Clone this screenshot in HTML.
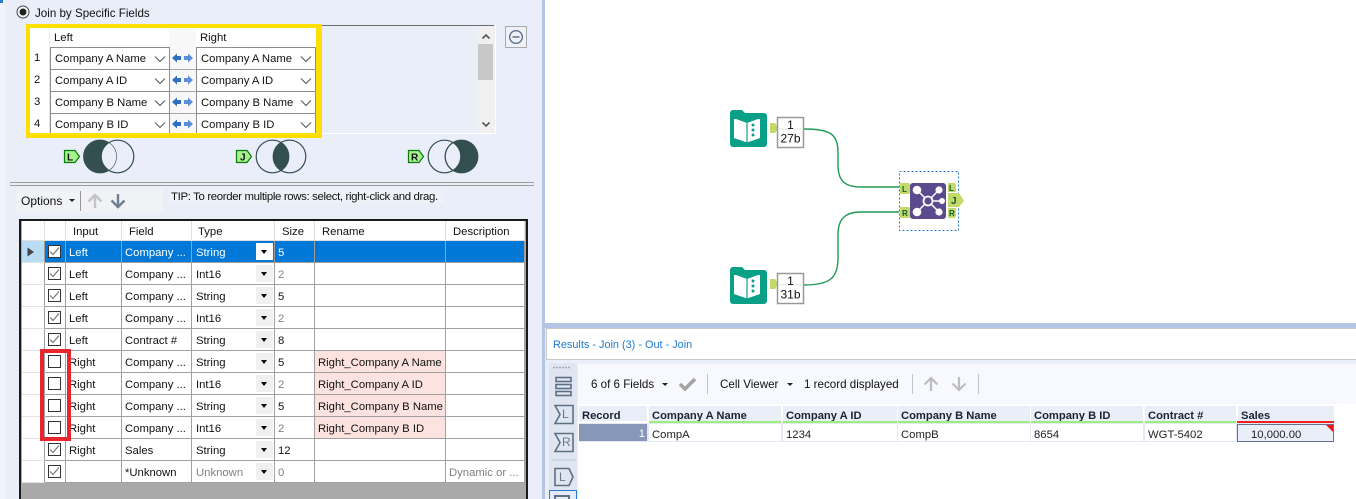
<!DOCTYPE html>
<html><head><meta charset="utf-8"><style>
html,body{margin:0;padding:0;width:1356px;height:499px;overflow:hidden;background:#e9eef9}
body{position:relative;font-family:"Liberation Sans",sans-serif;font-size:11.3px;color:#111}
.a{position:absolute;white-space:nowrap}
table{border-collapse:separate;border-spacing:0;table-layout:fixed;position:absolute}
#g{left:22px;top:221px;width:503px;background:#fff;font-size:11.3px}
#g td,#g th{box-sizing:border-box;border-right:1px solid #a0a0a0;border-bottom:1px solid #a0a0a0;height:22px;padding:3px 0 0 3px;font-weight:normal;text-align:left;white-space:nowrap;overflow:hidden;position:relative;line-height:18px}
#g th{height:20px;border-color:#e0e0e0;padding-left:7px;line-height:16px}
#g td:nth-child(5){padding-left:4px}
#g td:first-child{border-right:1px solid #a0a0a0;border-bottom-color:#e4e4e4}
#g tr.s td{background:#0078d7;color:#fff}
#g tr.s td:first-child{background:#b8dcf3}
#g td.k,#g th.k{padding:0}
.g{color:#808080}.p{background:#fde3df}
.b{position:absolute;left:64px;top:2px;width:17px;height:17px;background:#f0f0f0}
.b:after{content:"";position:absolute;left:5px;top:7px;border:3px solid transparent;border-top:4px solid #000;border-bottom:0}
tr.s .b{background:#fff}
.c{position:absolute;left:3px;top:4px;width:11px;height:11px;border:1px solid #333;background:#fff}
.c svg{position:absolute;left:0;top:0}
.j{position:absolute;background:#fff;border:1px solid #8c8c8c;box-sizing:border-box;padding-left:4px}
.j svg{position:absolute;right:3px;top:7px}
.h{position:absolute;top:406px;height:15px;background:#e9eef9;font-weight:bold;font-size:11.2px;line-height:20px;padding-left:3px;box-sizing:border-box;color:#1a2430}
.u{position:absolute;top:421px;height:2px;background:#9cf07a}
.d{position:absolute;top:424px;height:17px;background:#fff;line-height:22px;padding-left:3px;box-sizing:border-box;color:#222;font-size:11.3px}
</style></head><body>
<div class="a" style="left:0;top:0;width:5px;height:499px;background:#f1f4fb"></div>
<div class="a" style="left:0;top:0;width:3px;height:3px;background:#2a7bd0"></div>

<!-- radio -->
<svg class="a" style="left:16px;top:5px" width="14" height="14"><circle cx="7" cy="7" r="6" fill="#f4f6fb" stroke="#444"/><circle cx="7" cy="7" r="3.5" fill="#222"/></svg>
<div class="a" style="left:35px;top:6px;line-height:15px;font-size:11.6px">Join by Specific Fields</div>

<!-- join table surroundings -->
<div class="a" style="left:322px;top:25px;width:172px;height:1px;background:#6c6c6c"></div>
<div class="a" style="left:322px;top:133px;width:174px;height:1px;background:#fff"></div>
<div class="a" style="left:495px;top:26px;width:1px;height:108px;background:#fff"></div>
<div class="a" style="left:478px;top:27px;width:17px;height:106px;background:#f0f0f0"></div>
<div class="a" style="left:478px;top:44px;width:15px;height:36px;background:#c8c8c8"></div>
<svg class="a" style="left:481px;top:33px" width="10" height="7"><path d="M1.500 5.500L5 2l3.500 3.500" fill="none" stroke="#555" stroke-width="1.600"/></svg>
<svg class="a" style="left:481px;top:121px" width="10" height="7"><path d="M1.500 1.500L5 5l3.500-3.500" fill="none" stroke="#555" stroke-width="1.600"/></svg>
<div class="a" style="left:505px;top:26px;width:20px;height:20px;border:1px solid #aaa;background:#eef1f8"></div>
<svg class="a" style="left:508px;top:29px" width="16" height="16"><circle cx="8" cy="8" r="6.300" fill="none" stroke="#5e7183" stroke-width="1.400"/><path d="M4.500 8h7" stroke="#5e7183" stroke-width="1.500"/></svg>

<!-- join table -->
<div class="a" style="left:26px;top:24px;width:296px;height:114px;background:#fff"></div>
<div class="a" style="left:49px;top:29px;width:1px;height:104px;background:#e8e8e8"></div>
<div class="a" style="left:169px;top:29px;width:27px;height:104px;background:#f8f8f8"></div>
<div class="a" style="left:169px;top:69px;width:27px;height:1px;background:#a8a8a8"></div>
<div class="a" style="left:169px;top:91px;width:27px;height:1px;background:#a8a8a8"></div>
<div class="a" style="left:169px;top:113px;width:27px;height:1px;background:#a8a8a8"></div>
<div class="a" style="left:54px;top:31px;line-height:15px">Left</div>
<div class="a" style="left:200px;top:31px;line-height:15px">Right</div>
<div class="a" style="left:34px;top:51px;line-height:15px">1</div>
<div class="a" style="left:34px;top:73px;line-height:15px">2</div>
<div class="a" style="left:34px;top:95px;line-height:15px">3</div>
<div class="a" style="left:34px;top:117px;line-height:15px">4</div>

<div class="j" style="left:50px;top:47px;width:120px;height:23px;line-height:22px">Company A Name<svg width="12" height="8"><path d="M1 1.500l5 5 5-5" fill="none" stroke="#555"/></svg></div>
<div class="j" style="left:50px;top:69px;width:120px;height:23px;line-height:22px">Company A ID<svg width="12" height="8"><path d="M1 1.500l5 5 5-5" fill="none" stroke="#555"/></svg></div>
<div class="j" style="left:50px;top:91px;width:120px;height:23px;line-height:22px">Company B Name<svg width="12" height="8"><path d="M1 1.500l5 5 5-5" fill="none" stroke="#555"/></svg></div>
<div class="j" style="left:50px;top:113px;width:120px;height:20px;line-height:22px;border-bottom:0;overflow:hidden">Company B ID<svg width="12" height="8"><path d="M1 1.500l5 5 5-5" fill="none" stroke="#555"/></svg></div>
<div class="j" style="left:196px;top:47px;width:120px;height:23px;line-height:22px">Company A Name<svg width="12" height="8"><path d="M1 1.500l5 5 5-5" fill="none" stroke="#555"/></svg></div>
<div class="j" style="left:196px;top:69px;width:120px;height:23px;line-height:22px">Company A ID<svg width="12" height="8"><path d="M1 1.500l5 5 5-5" fill="none" stroke="#555"/></svg></div>
<div class="j" style="left:196px;top:91px;width:120px;height:23px;line-height:22px">Company B Name<svg width="12" height="8"><path d="M1 1.500l5 5 5-5" fill="none" stroke="#555"/></svg></div>
<div class="j" style="left:196px;top:113px;width:120px;height:20px;line-height:22px;border-bottom:0;overflow:hidden">Company B ID<svg width="12" height="8"><path d="M1 1.500l5 5 5-5" fill="none" stroke="#555"/></svg></div>

<svg class="a" style="left:172px;top:53px" width="22" height="10"><path d="M0 5l5-4.500V3h4v4H5v2.500z" fill="#2f6fc0"/><path d="M21 5l-5-4.500V3h-4v4h4v2.500z" fill="#5d8ed8"/></svg>
<svg class="a" style="left:172px;top:75px" width="22" height="10"><path d="M0 5l5-4.500V3h4v4H5v2.500z" fill="#2f6fc0"/><path d="M21 5l-5-4.500V3h-4v4h4v2.500z" fill="#5d8ed8"/></svg>
<svg class="a" style="left:172px;top:97px" width="22" height="10"><path d="M0 5l5-4.500V3h4v4H5v2.500z" fill="#2f6fc0"/><path d="M21 5l-5-4.500V3h-4v4h4v2.500z" fill="#5d8ed8"/></svg>
<svg class="a" style="left:172px;top:119px" width="22" height="10"><path d="M0 5l5-4.500V3h4v4H5v2.500z" fill="#2f6fc0"/><path d="M21 5l-5-4.500V3h-4v4h4v2.500z" fill="#5d8ed8"/></svg>

<!-- yellow frame overlay -->
<div class="a" style="left:26px;top:24px;width:286px;height:105px;border:solid #ffdf00;border-width:4px 6px 5px 4px"></div>

<!-- venn -->
<svg class="a" style="left:60px;top:138px" width="430" height="38">
<g>
<path d="M4.500 12.500h10.500l4.500 6-4.500 6h-10.500z" fill="#a5f28f" stroke="#0a7a0a" stroke-width="1.200"/>
<path d="M176.500 12.500h10.500l4.500 6-4.500 6h-10.500z" fill="#a5f28f" stroke="#0a7a0a" stroke-width="1.200"/>
<path d="M348.500 12.500h10.500l4.500 6-4.500 6h-10.500z" fill="#a5f28f" stroke="#0a7a0a" stroke-width="1.200"/>
<text x="7" y="22.500" font-size="10" font-weight="bold" fill="#111" font-family="Liberation Sans">L</text>
<text x="180" y="22.500" font-size="10" font-weight="bold" fill="#111" font-family="Liberation Sans">J</text>
<text x="351" y="22.500" font-size="10" font-weight="bold" fill="#111" font-family="Liberation Sans">R</text>
</g>
<g fill="none" stroke="#344f4f" stroke-width="1.200">
<circle cx="40" cy="18.500" r="16.300" fill="#344f4f"/>
<path d="M48.750 4.750A16.300 16.300 0 0 0 48.750 32.250A16.300 16.300 0 0 0 48.750 4.750z" fill="#e9eef9" stroke="none"/>
<circle cx="57.500" cy="18.500" r="16.300"/>
<circle cx="212.500" cy="18.500" r="16.300"/>
<circle cx="229.500" cy="18.500" r="16.300"/>
<path d="M221 4.600A16.300 16.300 0 0 1 221 32.400A16.300 16.300 0 0 1 221 4.600z" fill="#344f4f" stroke="none"/>
<circle cx="401.500" cy="18.500" r="16.300" fill="#344f4f"/>
<path d="M393 4.600A16.300 16.300 0 0 1 393 32.400A16.300 16.300 0 0 1 393 4.600z" fill="#e9eef9" stroke="none"/>
<circle cx="384.500" cy="18.500" r="16.300"/>
<path d="M393 4.600A16.300 16.300 0 0 0 393 32.400"/>
</g></svg>

<!-- divider -->
<div class="a" style="left:10px;top:182px;width:524px;height:1px;background:#9c9c9c"></div>
<div class="a" style="left:10px;top:185px;width:524px;height:1px;background:#9c9c9c"></div>

<!-- options toolbar -->
<div class="a" style="left:16px;top:189px;width:147px;height:24px;background:#f0f2f6"></div>
<div class="a" style="left:21px;top:193px;line-height:16px;font-size:12px">Options</div>
<div class="a" style="left:69px;top:199px;border:3px solid transparent;border-top:3px solid #222;border-bottom:0"></div>
<div class="a" style="left:80px;top:191px;width:1px;height:20px;background:#999"></div>
<svg class="a" style="left:86px;top:192px" width="18" height="18"><path d="M9 16V3M2.500 9.500L9 3l6.500 6.500" fill="none" stroke="#c4c4c4" stroke-width="2.400"/></svg>
<svg class="a" style="left:109px;top:192px" width="18" height="18"><path d="M9 2v13M2.500 8.500L9 15l6.500-6.500" fill="none" stroke="#6d7e92" stroke-width="2.400"/></svg>
<div class="a" style="left:169px;top:190px;width:275px;height:13px;background:#eef1f7"></div>
<div class="a" style="left:171px;top:189px;line-height:16px;font-size:11.400px;letter-spacing:-.34px">TIP: To reorder multiple rows: select, right-click and drag.</div>

<!-- grid -->
<div class="a" style="left:19px;top:219px;width:505px;height:290px;border:2px solid #1a1a1a;background:#a9a9a9"></div>
<table id="g" cellspacing="0">
<colgroup><col style="width:23px"><col style="width:21px"><col style="width:56px"><col style="width:70px"><col style="width:83px"><col style="width:40px"><col style="width:131px"><col style="width:79px"></colgroup>
<tr><th></th><th class="k"></th><th>Input</th><th>Field</th><th style="padding-left:6px">Type</th><th>Size</th><th>Rename</th><th>Description</th></tr>
<tr class="s"><td class="k"><svg style="position:absolute;left:5px;top:6px" width="8" height="10"><path d="M0.500 0.500L7 5 0.500 9.500z" fill="#444"/></svg></td><td class="k"><span class="c"><svg width="11" height="11"><path d="M1 5.500l3 3 6-7" fill="none" stroke="#777" stroke-width="1.200"/></svg></span></td><td>Left</td><td>Company ...</td><td>String<span class="b"></span></td><td>5</td><td></td><td></td></tr>
<tr><td class="k"></td><td class="k"><span class="c"><svg width="11" height="11"><path d="M1 5.500l3 3 6-7" fill="none" stroke="#777" stroke-width="1.200"/></svg></span></td><td>Left</td><td>Company ...</td><td>Int16<span class="b"></span></td><td class="g">2</td><td></td><td></td></tr>
<tr><td class="k"></td><td class="k"><span class="c"><svg width="11" height="11"><path d="M1 5.500l3 3 6-7" fill="none" stroke="#777" stroke-width="1.200"/></svg></span></td><td>Left</td><td>Company ...</td><td>String<span class="b"></span></td><td>5</td><td></td><td></td></tr>
<tr><td class="k"></td><td class="k"><span class="c"><svg width="11" height="11"><path d="M1 5.500l3 3 6-7" fill="none" stroke="#777" stroke-width="1.200"/></svg></span></td><td>Left</td><td>Company ...</td><td>Int16<span class="b"></span></td><td class="g">2</td><td></td><td></td></tr>
<tr><td class="k"></td><td class="k"><span class="c"><svg width="11" height="11"><path d="M1 5.500l3 3 6-7" fill="none" stroke="#777" stroke-width="1.200"/></svg></span></td><td>Left</td><td>Contract #</td><td>String<span class="b"></span></td><td>8</td><td></td><td></td></tr>
<tr><td class="k"></td><td class="k"><span class="c"></span></td><td>Right</td><td>Company ...</td><td>String<span class="b"></span></td><td>5</td><td class="p">Right_Company A Name</td><td></td></tr>
<tr><td class="k"></td><td class="k"><span class="c"></span></td><td>Right</td><td>Company ...</td><td>Int16<span class="b"></span></td><td class="g">2</td><td class="p">Right_Company A ID</td><td></td></tr>
<tr><td class="k"></td><td class="k"><span class="c"></span></td><td>Right</td><td>Company ...</td><td>String<span class="b"></span></td><td>5</td><td class="p">Right_Company B Name</td><td></td></tr>
<tr><td class="k"></td><td class="k"><span class="c"></span></td><td>Right</td><td>Company ...</td><td>Int16<span class="b"></span></td><td class="g">2</td><td class="p">Right_Company B ID</td><td></td></tr>
<tr><td class="k"></td><td class="k"><span class="c"><svg width="11" height="11"><path d="M1 5.500l3 3 6-7" fill="none" stroke="#777" stroke-width="1.200"/></svg></span></td><td>Right</td><td>Sales</td><td>String<span class="b"></span></td><td>12</td><td></td><td></td></tr>
<tr><td class="k"></td><td class="k"><span class="c"><svg width="11" height="11"><path d="M1 5.500l3 3 6-7" fill="none" stroke="#777" stroke-width="1.200"/></svg></span></td><td></td><td>*Unknown</td><td class="g">Unknown<span class="b"></span></td><td class="g">0</td><td></td><td class="g">Dynamic or ...</td></tr>
</table>
<div class="a" style="left:40px;top:349px;width:23px;height:84px;border:4px solid #e8262d"></div>

<!-- right pane -->
<div class="a" style="left:542px;top:0;width:3px;height:499px;background:#b4c4e4"></div>
<div class="a" style="left:545px;top:0;width:811px;height:323px;background:#fff"></div>
<div class="a" style="left:545px;top:323px;width:811px;height:5px;background:#b4c4e4"></div>

<!-- canvas -->
<svg class="a" style="left:545px;top:0" width="811" height="323">
<g fill="none" stroke="#1f9a55" stroke-width="1.400">
<path d="M259 129C285 129 293 134 293 152V165C293 181 300 187 316 187H354"/>
<path d="M259 285C285 285 293 278 293 258V235C293 219 300 212 316 212H354"/>
</g>
<path d="M185 113a3 3 0 0 1 3-3h9l3 3h19a3 3 0 0 1 3 3v28a3 3 0 0 1-3 3h-31a3 3 0 0 1-3-3z" fill="#0aa088"/>
<path d="M191 119l11 4 11-4 2 0v19l-13 5-13-5v-19z" fill="#fff"/>
<path d="M202 123v20" stroke="#0aa088" stroke-width="1.200"/>
<path d="M190 139l12 4 12-4" fill="none" stroke="#0aa088" stroke-width="1"/>
<circle cx="208" cy="125" r="1.500" fill="#0aa088"/><circle cx="208" cy="130" r="1.500" fill="#0aa088"/><circle cx="208" cy="135" r="1.500" fill="#0aa088"/>
<path d="M225 123h5l2 3v4l-2 3h-5z" fill="#c3d96a"/>
<rect x="232.500" y="117.500" width="26" height="30" fill="#fff" stroke="#999" stroke-width="1.500"/>
<path d="M233 129h25" stroke="#dfeee4"/>
<text x="245.500" y="129" font-size="12" text-anchor="middle" font-family="Liberation Sans" fill="#111">1</text>
<text x="245.500" y="142.500" font-size="12" text-anchor="middle" font-family="Liberation Sans" fill="#111">27b</text>
<path d="M185 270a3 3 0 0 1 3-3h9l3 3h19a3 3 0 0 1 3 3v28a3 3 0 0 1-3 3h-31a3 3 0 0 1-3-3z" fill="#0aa088"/>
<path d="M191 275l11 4 11-4 2 0v19l-13 5-13-5v-19z" fill="#fff"/>
<path d="M202 279v20" stroke="#0aa088" stroke-width="1.200"/>
<path d="M190 295l12 4 12-4" fill="none" stroke="#0aa088" stroke-width="1"/>
<circle cx="208" cy="281" r="1.500" fill="#0aa088"/><circle cx="208" cy="286" r="1.500" fill="#0aa088"/><circle cx="208" cy="291" r="1.500" fill="#0aa088"/>
<path d="M225 279h5l2 3v4l-2 3h-5z" fill="#c3d96a"/>
<rect x="232.500" y="273.500" width="26" height="30" fill="#fff" stroke="#999" stroke-width="1.500"/>
<path d="M233 285h25" stroke="#dfeee4"/>
<text x="245.500" y="285" font-size="12" text-anchor="middle" font-family="Liberation Sans" fill="#111">1</text>
<text x="245.500" y="298.500" font-size="12" text-anchor="middle" font-family="Liberation Sans" fill="#111">31b</text>
<rect x="354.500" y="171.500" width="59" height="59" fill="none" stroke="#2a7bd0" stroke-dasharray="2 2"/>
<path d="M355 183h9l2 3v6l-2 2h-9z" fill="#c3d96a"/>
<path d="M355 207h9l2 3v6l-2 2h-9z" fill="#c3d96a"/>
<text x="357" y="192" font-size="8" font-weight="bold" fill="#0e5c30" font-family="Liberation Sans">L</text>
<text x="357" y="216" font-size="8" font-weight="bold" fill="#0e5c30" font-family="Liberation Sans">R</text>
<rect x="365" y="183" width="36" height="36" rx="3" fill="#5b4a8e"/>
<g stroke="#fff" stroke-width="1.500" fill="none">
<path d="M372 190l11 11M394 190l-11 11M372 212l11-11M394 212l-11-11M383 201h13"/>
<circle cx="383" cy="201" r="4.500" fill="#5b4a8e" stroke-width="1.800"/>
</g>
<g fill="#fff"><circle cx="372" cy="190" r="4.300"/><circle cx="394" cy="190" r="3.600"/><circle cx="397" cy="201" r="3"/><circle cx="372" cy="212" r="4.300"/><circle cx="394" cy="212" r="3.600"/></g>
<path d="M403 183h7l1 2v7h-8zM403 208h8v7l-1 3h-7z" fill="#c3d96a"/>
<path d="M403 193h11l5 8-5 6h-11z" fill="#c3d96a"/>
<text x="404" y="191" font-size="8" font-weight="bold" fill="#0e5c30" font-family="Liberation Sans">L</text>
<text x="406" y="204" font-size="10" font-weight="bold" fill="#0e5c30" font-family="Liberation Sans">J</text>
<text x="404" y="216" font-size="8" font-weight="bold" fill="#0e5c30" font-family="Liberation Sans">R</text>
</svg>

<!-- results -->
<div class="a" style="left:546px;top:328px;width:810px;height:30px;background:#fff;border:1px solid #c8c8c8;border-right:0"></div>
<div class="a" style="left:553px;top:337px;line-height:16px;color:#1f7ad0;font-size:10.900px">Results - Join (3) - Out - Join</div>
<div class="a" style="left:578px;top:364px;width:778px;height:40px;background:#f8f9fe"></div>
<div class="a" style="left:578px;top:404px;width:778px;height:95px;background:#fff"></div>
<div class="a" style="left:549px;top:363px;width:28px;height:136px;background:#dfe5f1"></div>

<svg class="a" style="left:549px;top:363px" width="29" height="136" fill="none" stroke="#5e7183" stroke-width="1.600">
<path d="M4 4.500h18" stroke="#aab" stroke-width="1.500" stroke-dasharray="2 1"/>
<rect x="7" y="14.500" width="15" height="4"/><rect x="7" y="21.500" width="15" height="4"/><rect x="7" y="28.500" width="15" height="4"/>
<path d="M6 42.500h18v18H6l5-9z"/><path d="M6 70.500h18v18H6l5-9z"/>
<path d="M6 105.500h14l4 8.500-4 8.500H6z"/>
<path d="M3 97h24" stroke="#bcc" stroke-width="1"/>
</svg>
<div class="a" style="left:562px;top:407px;font-size:12px;color:#6a7a8c">L</div>
<div class="a" style="left:562px;top:435px;font-size:12px;color:#6a7a8c">R</div>
<div class="a" style="left:559px;top:470px;font-size:12px;color:#6a7a8c">L</div>
<div class="a" style="left:549px;top:490px;width:26px;height:9px;border:1px solid #2a7bd0;border-bottom:0;background:#e4ebf8"></div>
<div class="a" style="left:554px;top:495px;width:16px;height:4px;border:2px solid #5e7183;border-bottom:0;box-sizing:border-box"></div>

<div class="a" style="left:591px;top:377px;line-height:16px;font-size:11.600px">6 of 6 Fields</div>
<div class="a" style="left:662px;top:383px;border:3px solid transparent;border-top:3px solid #222;border-bottom:0"></div>
<svg class="a" style="left:678px;top:376px" width="20" height="16"><path d="M2 8l5 5 10-10" fill="none" stroke="#a4a4a4" stroke-width="3.600"/></svg>
<div class="a" style="left:707px;top:374px;width:1px;height:20px;background:#c4c4c4"></div>
<div class="a" style="left:720px;top:377px;line-height:16px;font-size:11.600px">Cell Viewer</div>
<div class="a" style="left:787px;top:383px;border:3px solid transparent;border-top:3px solid #222;border-bottom:0"></div>
<div class="a" style="left:804px;top:377px;line-height:16px;font-size:11.600px">1 record displayed</div>
<div class="a" style="left:912px;top:374px;width:1px;height:20px;background:#c4c4c4"></div>
<svg class="a" style="left:922px;top:375px" width="18" height="18"><path d="M9 16V3M2.500 9.500L9 3l6.500 6.500" fill="none" stroke="#bdbdbd" stroke-width="2.200"/></svg>
<svg class="a" style="left:950px;top:375px" width="18" height="18"><path d="M9 2v13M2.500 8.500L9 15l6.500-6.500" fill="none" stroke="#bdbdbd" stroke-width="2.200"/></svg>
<div class="a" style="left:978px;top:374px;width:1px;height:20px;background:#c4c4c4"></div>

<div class="h" style="left:579px;width:68px">Record</div>
<div class="h" style="left:649px;width:132px">Company A Name</div>
<div class="h" style="left:783px;width:114px">Company A ID</div>
<div class="h" style="left:898px;width:132px">Company B Name</div>
<div class="h" style="left:1031px;width:112px">Company B ID</div>
<div class="h" style="left:1145px;width:91px">Contract #</div>
<div class="h" style="left:1238px;width:96px">Sales</div>
<div class="a" style="left:579px;top:423px;width:755px;height:1px;background:#e3e8f4"></div>
<div class="u" style="left:649px;width:132px"></div>
<div class="u" style="left:783px;width:114px"></div>
<div class="u" style="left:898px;width:132px"></div>
<div class="u" style="left:1031px;width:112px"></div>
<div class="u" style="left:1145px;width:91px"></div>
<div class="u" style="left:1237px;width:97px;background:#f22222"></div>
<div class="a" style="left:579px;top:424px;width:755px;height:18px;background:#e3e8f4"></div>
<div class="d" style="left:579px;width:68px;background:#8797b8;color:#fff;text-align:right;padding-right:2px;line-height:20px">1</div>
<div class="d" style="left:649px;width:132px">CompA</div>
<div class="d" style="left:783px;width:114px">1234</div>
<div class="d" style="left:898px;width:132px">CompB</div>
<div class="d" style="left:1031px;width:112px">8654</div>
<div class="d" style="left:1145px;width:91px;padding-left:3px">WGT-5402</div>
<div class="d" style="left:1237px;width:97px;height:18px;background:#e9eef9;border:1px solid #66708c;padding-left:13px;line-height:20px">10,000.00</div>
<svg class="a" style="left:1325px;top:425px" width="8" height="8"><path d="M1 0h7v7z" fill="#f01818"/></svg>
</body></html>
